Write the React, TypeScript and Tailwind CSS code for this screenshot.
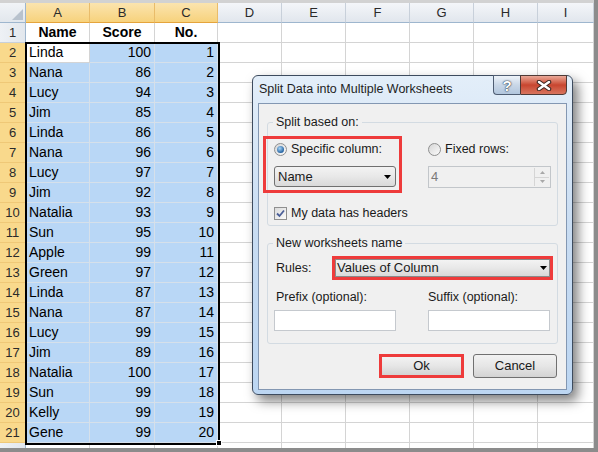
const rows: [string, number, number][] = [
  ["Linda", 100, 1],
  ["Nana", 86, 2],
  ["Lucy", 94, 3],
  ["Jim", 85, 4],
  ["Linda", 86, 5],
  ["Nana", 96, 6],
  ["Lucy", 97, 7],
  ["Jim", 92, 8],
  ["Natalia", 93, 9],
  ["Sun", 95, 10],
  ["Apple", 99, 11],
  ["Green", 97, 12],
  ["Linda", 87, 13],
  ["Nana", 87, 14],
  ["Lucy", 99, 15],
  ["Jim", 89, 16],
  ["Natalia", 100, 17],
  ["Sun", 99, 18],
  ["Kelly", 99, 19],
  ["Gene", 99, 20],
];

const letters = ["A", "B", "C", "D", "E", "F", "G", "H", "I"];

const ColHeader = ({ label, active }: { label: string; active: boolean }) => (
  <div
    className={
      active
        ? "flex items-center justify-center bg-gradient-to-b from-[#fbe4ae] to-[#f7d27c] border-r border-b border-r-[#e9bc6a] border-b-[#e5a43c] text-[13px] text-[#2a2a2a]"
        : "flex items-center justify-center bg-gradient-to-b from-[#f4f6f9] to-[#e1e6ed] border-r border-b border-r-[#c8d0da] border-b-[#9eb6ce] text-[13px] text-[#2a2a2a]"
    }
  >
    {label}
  </div>
);

const RowHeader = ({ n, active }: { n?: number; active: boolean }) => (
  <div
    className={
      active
        ? "flex items-center justify-center bg-[#f9d98c] border-r border-b border-r-[#e2a13a] border-b-[#efc877] text-[13px] text-[#2a2a2a]"
        : "flex items-center justify-center bg-gradient-to-r from-[#eef1f5] to-[#e2e7ed] border-r border-b border-r-[#9eb6ce] border-b-[#c8d0da] text-[13px] text-[#2a2a2a]"
    }
  >
    {n}
  </div>
);

const Radio = ({ checked }: { checked: boolean }) => (
  <span className="w-[13px] h-[13px] shrink-0 rounded-full border border-[#8e8f8f] bg-gradient-to-br from-[#d6d6d6] to-[#fbfbfb] flex items-center justify-center">
    {checked && (
      <span className="w-[7px] h-[7px] rounded-full bg-[radial-gradient(circle_at_40%_35%,#a8d6f7,#1d5c9c_75%)]" />
    )}
  </span>
);

const Arrow = () => (
  <svg width="7" height="4" viewBox="0 0 7 4" className="shrink-0">
    <polygon points="0,0 7,0 3.5,4" fill="#000" />
  </svg>
);

const SheetGrid = () => (
  <div className="grid grid-cols-[26px_64px_65px_63px_64px_64px_64px_64px_64px_56px] auto-rows-[20px]">
    {/* corner */}
    <div className="relative bg-gradient-to-b from-[#f1f4f7] to-[#e2e7ed] border-r border-b border-r-[#9eb6ce] border-b-[#9eb6ce]">
      <svg width="11" height="11" viewBox="0 0 11 11" className="absolute right-[2px] bottom-[2px]">
        <polygon points="11,0 11,11 0,11" fill="#b8c2cd" />
      </svg>
    </div>
    {letters.map((l, i) => (
      <ColHeader key={l} label={l} active={i < 3} />
    ))}

    {/* row 1 */}
    <RowHeader n={1} active={false} />
    <div className="flex items-center justify-center font-bold border-r border-b border-[#d4d4d4]">Name</div>
    <div className="flex items-center justify-center font-bold border-r border-b border-[#d4d4d4]">Score</div>
    <div className="flex items-center justify-center font-bold border-r border-b border-[#d4d4d4]">No.</div>
    {letters.slice(3).map((l) => (
      <div key={"r1" + l} className="border-r border-b border-[#d4d4d4]" />
    ))}

    {rows.map(([name, score, no], i) => (
      <div key={i} className="contents">
        <RowHeader n={i + 2} active />
        <div
          className={
            i === 0
              ? "flex items-center px-[3px] bg-white border-r border-b border-[#d4d4d4]"
              : "flex items-center px-[3px] bg-[#b9d7f6] border-r border-b border-[#d6e0ea]"
          }
        >
          {name}
        </div>
        <div className="flex items-center justify-end px-[3px] bg-[#b9d7f6] border-r border-b border-[#d6e0ea]">{score}</div>
        <div className="flex items-center justify-end px-[3px] bg-[#b9d7f6] border-r border-b border-[#d6e0ea]">{no}</div>
        {letters.slice(3).map((l) => (
          <div key={l} className="border-r border-b border-[#d4d4d4]" />
        ))}
      </div>
    ))}

    {/* row 22, only a sliver shows */}
    <RowHeader active={false} />
    {letters.map((l) => (
      <div key={"r22" + l} className="border-r border-b border-[#d4d4d4]" />
    ))}
  </div>
);

const SplitDialog = () => (
  <div className="absolute left-[252px] top-[72px] w-[321px] h-[320px] rounded-[6px] border border-[#3d4b5e] bg-gradient-to-b from-[#e3eef9] via-[#c8dcf2] to-[#bcd6f2] shadow-[5px_6px_12px_rgba(0,0,0,0.5)] flex flex-col px-[5px] pb-[4px] font-['Liberation_Sans',Arial,sans-serif] text-[12.5px] text-[#1a1a1a]">
    {/* title bar */}
    <div className="h-[27px] flex items-center pl-[1px] text-[12.5px] text-[#1e1e1e]">Split Data into Multiple Worksheets</div>
    <div className="absolute top-[-1px] right-[5px] flex h-[20px]">
      <div className="w-[27px] h-full flex items-center justify-center rounded-bl-[4px] border border-r-0 border-[#4f5d72] bg-gradient-to-b from-[#eef3f9] via-[#c9d7e7] to-[#b2c6dd] text-white font-bold text-[15px] leading-none [text-shadow:0_0_2px_#1b2a3c,0_0_1px_#1b2a3c]">
        ?
      </div>
      <div className="w-[47px] h-full flex items-center justify-center rounded-br-[4px] border border-[#4f3a36] bg-gradient-to-b from-[#e9a898] via-[#c8452f] to-[#d8745e]">
        <svg width="16" height="11" viewBox="0 0 16 11">
          <path d="M3 2 L13 9 M13 2 L3 9" stroke="#3a2520" strokeWidth="4.5" strokeLinecap="round" />
          <path d="M3 2 L13 9 M13 2 L3 9" stroke="#ffffff" strokeWidth="2.5" strokeLinecap="round" />
        </svg>
      </div>
    </div>

    {/* body */}
    <div className="flex-1 bg-[#f0f0f0] border border-[#8397b2] px-[8px] pt-[18px] flex flex-col">
      {/* group 1 */}
      <div className="relative h-[104px] border border-[#d3dbe2] rounded-[3px]">
        <span className="absolute -top-[8px] left-[5px] px-[3px] bg-[#f0f0f0] leading-[14px]">Split based on:</span>
        <div className="absolute left-[-5px] top-[13px] w-[139px] h-[57px] border-[3px] border-[#ee3b3b]" />
        <div className="grid grid-cols-[154px_123px] pl-[6px] pt-[20px]">
          <div className="flex items-center gap-[4px] h-[13px]">
            <Radio checked />
            <span>Specific column:</span>
          </div>
          <div className="flex items-center gap-[4px] h-[13px]">
            <Radio checked={false} />
            <span>Fixed rows:</span>
          </div>
          <div className="mt-[10px] w-[122px] h-[21px] rounded-[3px] border border-[#707070] bg-gradient-to-b from-[#f3f3f3] via-[#e8e8e8] to-[#d9d9d9] flex items-center justify-between pl-[3px] pr-[4px] text-[13px]">
            <span>Name</span>
            <Arrow />
          </div>
          <div className="mt-[10px] w-[123px] h-[22px] border border-[#c2c6ca] flex items-stretch">
            <span className="flex-1 flex items-center pl-[2px] text-[13px] text-[#7a7a7a]">4</span>
            <div className="w-[15px] flex flex-col border-l border-[#d5d5d5] my-[1px] mr-[1px]">
              <div className="flex-1 flex items-center justify-center border-b border-[#d5d5d5]">
                <svg width="5" height="3" viewBox="0 0 5 3"><polygon points="0,3 5,3 2.5,0" fill="#a8a8a8" /></svg>
              </div>
              <div className="flex-1 flex items-center justify-center">
                <svg width="5" height="3" viewBox="0 0 5 3"><polygon points="0,0 5,0 2.5,3" fill="#a8a8a8" /></svg>
              </div>
            </div>
          </div>
          <div className="col-span-2 mt-[16px] flex items-center gap-[4px]">
            <span className="w-[13px] h-[13px] border border-[#8f8f8f] bg-gradient-to-br from-[#dadada] to-[#fbfbfb] flex items-center justify-center">
              <svg width="9" height="9" viewBox="0 0 9 9">
                <path d="M1 4.5 L3.5 7 L8 1.5" stroke="#4a5e98" strokeWidth="1.8" fill="none" />
              </svg>
            </span>
            <span>My data has headers</span>
          </div>
        </div>
      </div>

      {/* group 2 */}
      <div className="relative mt-[17px] h-[101px] border border-[#d3dbe2] rounded-[3px]">
        <span className="absolute -top-[8px] left-[5px] px-[3px] bg-[#f0f0f0] leading-[14px]">New worksheets name</span>
        <div className="flex items-center pl-[8px] pt-[12px]">
          <span className="w-[56px]">Rules:</span>
          <div className="w-[221px] h-[24px] border-[3px] border-[#ee3b3b]">
            <div className="w-full h-full border border-[#8a8a8a] bg-gradient-to-b from-[#f3f3f3] via-[#e8e8e8] to-[#d9d9d9] flex items-center justify-between pl-[1px] pr-[2px] text-[13px]">
              <span>Values of Column</span>
              <Arrow />
            </div>
          </div>
        </div>
        <div className="grid grid-cols-[154px_123px] pl-[6px] mt-[10px]">
          <span className="pl-[2px] leading-[14px]">Prefix (optional):</span>
          <span className="leading-[14px]">Suffix (optional):</span>
          <div className="mt-[6px] w-[122px] h-[21px] bg-white border border-[#c5c9ce]" />
          <div className="mt-[6px] w-[122px] h-[21px] bg-white border border-[#c5c9ce]" />
        </div>
      </div>

      {/* buttons */}
      <div className="mt-[10px] flex justify-end gap-[9px] pr-[1px]">
        <button className="w-[85px] h-[24px] border-[3px] border-[#ee3b3b] bg-gradient-to-b from-[#f2f2f2] via-[#e6e6e6] to-[#d3d3d3] flex items-center justify-center text-[13px]">
          Ok
        </button>
        <button className="w-[84px] h-[24px] rounded-[3px] border border-[#707070] bg-gradient-to-b from-[#f2f2f2] via-[#e6e6e6] to-[#d3d3d3] flex items-center justify-center text-[13px]">
          Cancel
        </button>
      </div>
    </div>
  </div>
);

export default function App() {
  return (
    <div className="w-[598px] h-[452px] bg-[#8c8c8c] overflow-hidden">
      <div className="w-[594px] h-[3px] bg-[#d2d2d2]" />
      <div className="relative w-[594px] h-[445px] bg-white overflow-hidden font-['Liberation_Sans',Arial,sans-serif] text-[14px] text-black">
        <SheetGrid />
        {/* selection outline + fill handle */}
        <div className="absolute left-[25px] top-[39px] w-[195px] h-[403px] border-2 border-black" />
        <div className="absolute left-[216px] top-[437px] w-[6px] h-[6px] bg-black border border-white" />
        <SplitDialog />
      </div>
    </div>
  );
}
